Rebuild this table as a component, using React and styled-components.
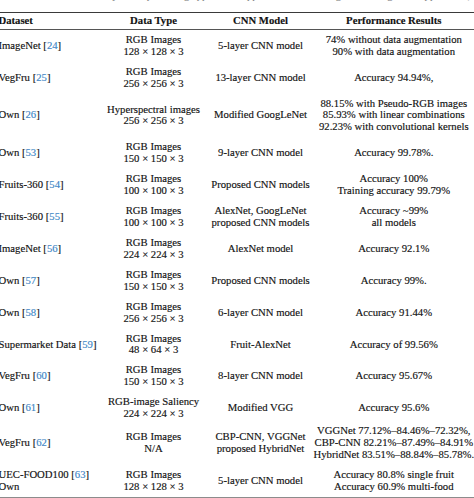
import React from "react";
import styled, { createGlobalStyle } from "styled-components";

const Global = createGlobalStyle`
  html, body { margin: 0; padding: 0; background: #fff; }
  body { font-family: "Liberation Serif", "Times New Roman", serif; color: #121212; overflow: hidden; }
`;

const Page = styled.div`
  width: 474px;
  height: 498px;
  display: flex;
  flex-direction: column;
  overflow: hidden;
`;

const Caption = styled.div`
  margin-top: -10px;
  height: 12px;
  line-height: 12px;
  font-size: 10.6px;
  color: #777;
  padding-left: 40px;
  white-space: nowrap;
  flex: none;
`;

const Table = styled.div`
  margin-top: 10px;
  margin-left: -1.5px;
  display: flex;
  flex-direction: column;
  border-top: 1.6px solid #3a3a3a;
  flex: none;
`;

const Row = styled.div`
  display: grid;
  grid-template-columns: 101px 108px 106px 1fr;
  align-items: center;
  padding: ${(p) =>
    p.$head ? "1.5px 0 2.5px" : `${p.$top ?? 4.15}px 0 4.15px`};
  border-bottom: ${(p) => (p.$head ? "1px solid #555" : "none")};
  font-size: 10.7px;
  line-height: 11.8px;
  font-weight: ${(p) => (p.$head ? 700 : 400)};
  -webkit-text-stroke: 0.15px currentColor;
`;

const Cell = styled.div`
  text-align: ${(p) => (p.$left ? "left" : "center")};
  white-space: nowrap;
`;

const Ref = styled.span`
  color: #3d86c6;
`;

const Footer = styled.div`
  margin-top: auto;
  height: 7px;
  background: #b9b9b9;
  border-top: 1px solid #8c8c8c;
  flex: none;
`;

const rows = [
  [["ImageNet ", "24"], ["RGB Images", "128 × 128 × 3"], ["5-layer CNN model"], ["74% without data augmentation", "90% with data augmentation"]],
  [["VegFru ", "25"], ["RGB Images", "256 × 256 × 3"], ["13-layer CNN model"], ["Accuracy 94.94%,"]],
  [["Own ", "26"], ["Hyperspectral images", "256 × 256 × 3"], ["Modified GoogLeNet"], ["88.15% with Pseudo-RGB images", "85.93% with linear combinations", "92.23% with convolutional kernels"]],
  [["Own ", "53"], ["RGB Images", "150 × 150 × 3"], ["9-layer CNN model"], ["Accuracy 99.78%."]],
  [["Fruits-360 ", "54"], ["RGB Images", "100 × 100 × 3"], ["Proposed CNN models"], ["Accuracy 100%", "Training accuracy 99.79%"]],
  [["Fruits-360 ", "55"], ["RGB Images", "100 × 100 × 3"], ["AlexNet, GoogLeNet", "proposed CNN models"], ["Accuracy ~99%", "all models"]],
  [["ImageNet ", "56"], ["RGB Images", "224 × 224 × 3"], ["AlexNet model"], ["Accuracy 92.1%"]],
  [["Own ", "57"], ["RGB Images", "150 × 150 × 3"], ["Proposed CNN models"], ["Accuracy 99%."]],
  [["Own ", "58"], ["RGB Images", "256 × 256 × 3"], ["6-layer CNN model"], ["Accuracy 91.44%"]],
  [["Supermarket Data ", "59"], ["RGB Images", "48 × 64 × 3"], ["Fruit-AlexNet"], ["Accuracy of 99.56%"]],
  [["VegFru ", "60"], ["RGB Images", "150 × 150 × 3"], ["8-layer CNN model"], ["Accuracy 95.67%"]],
  [["Own ", "61"], ["RGB-image Saliency", "224 × 224 × 3"], ["Modified VGG"], ["Accuracy 95.6%"]],
  [["VegFru ", "62"], ["RGB Images", "N/A"], ["CBP-CNN, VGGNet", "proposed HybridNet"], ["VGGNet 77.12%–84.46%–72.32%,", "CBP-CNN 82.21%–87.49%–84.91%", "HybridNet 83.51%–88.84%–85.78%."], 1.4],
];

function Lines({ items }) {
  return items.map((t, i) => (
    <React.Fragment key={i}>
      {i > 0 && <br />}
      {t}
    </React.Fragment>
  ));
}

export default function App() {
  return (
    <Page>
      <Global />
      <Caption>
        Table 3. Summary of deep learning approaches applied to fruit and vegetable recognition approaches, typically applied.
      </Caption>
      <Table>
        <Row $head>
          <Cell $left>Dataset</Cell>
          <Cell>Data Type</Cell>
          <Cell>CNN Model</Cell>
          <Cell>Performance Results</Cell>
        </Row>
        {rows.map((r, i) => (
          <Row key={i} $top={r[4]}>
            <Cell $left>
              {r[0][0]}[<Ref>{r[0][1]}</Ref>]
            </Cell>
            <Cell><Lines items={r[1]} /></Cell>
            <Cell><Lines items={r[2]} /></Cell>
            <Cell><Lines items={r[3]} /></Cell>
          </Row>
        ))}
        <Row>
          <Cell $left>
            UEC-FOOD100 [<Ref>63</Ref>]
            <br />
            Own
          </Cell>
          <Cell><Lines items={["RGB Images", "128 × 128 × 3"]} /></Cell>
          <Cell>5-layer CNN model</Cell>
          <Cell><Lines items={["Accuracy 80.8% single fruit", "Accuracy 60.9% multi-food"]} /></Cell>
        </Row>
      </Table>
      <Footer />
    </Page>
  );
}
